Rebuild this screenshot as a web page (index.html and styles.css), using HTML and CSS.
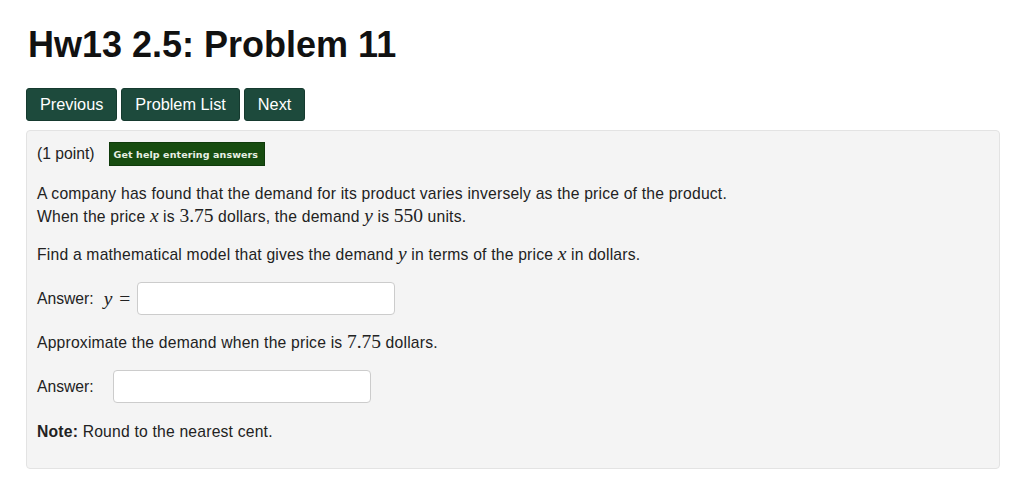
FILE: index.html
```html
<!DOCTYPE html>
<html lang="en">
<head>
  <meta charset="UTF-8" />
  <title>Hw13 2.5: Problem 11</title>
  <link rel="stylesheet" href="styles.css">
</head>
<body>
  <h1 class="title">Hw13 2.5: Problem 11</h1>

  <div class="nav">
    <button class="nav-btn">Previous</button>
    <button class="nav-btn">Problem List</button>
    <button class="nav-btn">Next</button>
  </div>

  <div class="problem">
    <div class="points">
      <span>(1 point)</span>
      <span class="help">Get help entering answers</span>
    </div>

    <p class="text">A company has found that the demand for its product varies inversely as the price of the product.<br>
    When the price <i class="math">x</i> is <span class="math">3.75</span> dollars, the demand <i class="math">y</i> is <span class="math">550</span> units.</p>

    <p class="text">Find a mathematical model that gives the demand <i class="math">y</i> in terms of the price <i class="math">x</i> in dollars.</p>

    <div class="answer">
      <span>Answer:</span>
      <span class="eq"><i class="math">y</i><span class="math eq-sign">=</span></span>
      <input type="text" class="field">
    </div>

    <p class="text">Approximate the demand when the price is <span class="math">7.75</span> dollars.</p>

    <div class="answer">
      <span>Answer:</span>
      <input type="text" class="field field-b">
    </div>

    <p class="text note"><b>Note:</b> Round to the nearest cent.</p>
  </div>
</body>
</html>
```

FILE: styles.css
```css
body {
  margin: 0;
  padding: 0 24px 0 26px;
  font-family: "Liberation Sans", Arial, sans-serif;
  font-size: 15.7px;
  color: #222;
  background: #fff;
}

.title {
  margin: 0;
  padding: 25px 0 0 2px;
  font-size: 36px;
  line-height: 40px;
  font-weight: bold;
  color: #111;
}

.nav {
  display: flex;
  gap: 4px;
  margin-top: 23px;
}

.nav-btn {
  height: 33px;
  padding: 0 13px;
  font-family: "Liberation Sans", Arial, sans-serif;
  font-size: 16.3px;
  color: #fff;
  background: #1d4a3c;
  border: 1px solid #163a2f;
  border-radius: 3px;
}

.problem {
  box-sizing: border-box;
  margin-top: 9px;
  height: 339px;
  padding: 10px 10px 0 10px;
  background: #f4f4f4;
  border: 1px solid #e3e3e3;
  border-radius: 4px;
}

.points {
  display: flex;
  align-items: center;
  gap: 14px;
  height: 25px;
}

.help {
  display: inline-block;
  padding: 6px 6px 5px 4px;
  font-family: "DejaVu Sans", sans-serif;
  font-size: 9.5px;
  font-weight: bold;
  letter-spacing: 0.1px;
  color: #e8f0e4;
  background: #174c10;
  border: 1px solid #0f3a0b;
}

.text {
  margin: 0;
  line-height: 23px;
  letter-spacing: 0.2px;
}

.points + .text {
  margin-top: 16px;
}

.text + .text {
  margin-top: 15px;
}

.math {
  font-family: "Liberation Serif", "Times New Roman", serif;
  font-size: 19.5px;
  line-height: 1;
  letter-spacing: 0;
}

.answer {
  display: flex;
  align-items: center;
  margin: 16px 0;
}

.eq {
  margin: 0 7px 0 10px;
}

.eq-sign {
  margin-left: 7px;
}

.field {
  width: 258px;
  height: 33px;
  box-sizing: border-box;
  background: #fff;
  border: 1px solid #ccc;
  border-radius: 4px;
}

.field-b {
  margin-left: 19px;
}

.note {
  margin-top: 17px;
}
```
